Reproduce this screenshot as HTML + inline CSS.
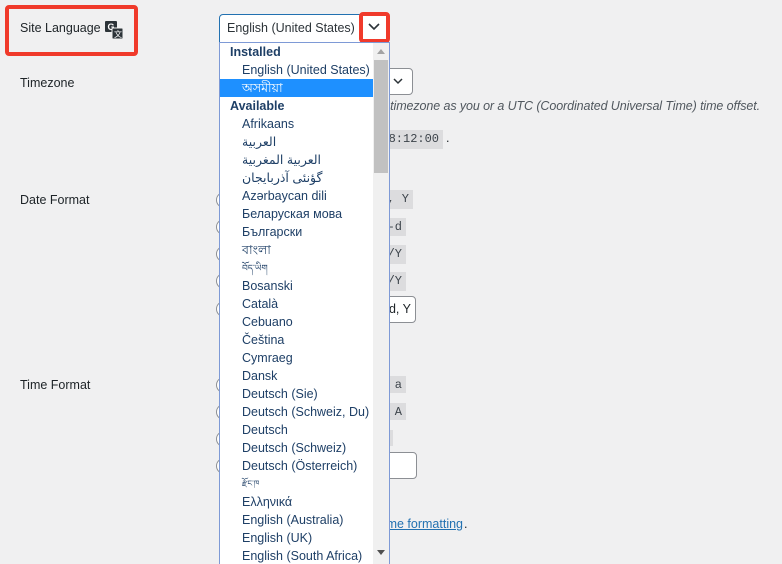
<!DOCTYPE html>
<html style="width:782px;height:564px;overflow:hidden"><head><meta charset="utf-8">
<style>
body{margin:0;width:782px;height:564px;background:#f0f0f1;font-family:"Liberation Sans","DejaVu Sans",sans-serif;font-size:12.5px;color:#1d2327;position:relative;overflow:hidden}
.a{position:absolute;white-space:nowrap}
.lbl{font-size:12.5px;color:#1d2327}
.code{position:absolute;background:#dcdcde;font-family:"Liberation Mono",monospace;font-size:12px;line-height:18px;padding:0 4px;color:#3c434a;text-align:right;box-sizing:border-box;overflow:hidden;white-space:nowrap}
.inp{position:absolute;background:#fff;border:1px solid #8c8f94;border-radius:4px}
.radio{position:absolute;width:14px;height:14px;border:1px solid #8c8f94;border-radius:50%;background:#fff}
.red{position:absolute;border:4px solid #f03a2b;border-radius:4px}
#dd{position:absolute;left:219px;top:42px;width:169px;height:530px;background:#fff;border:1px solid #7e9ad6;overflow:hidden}
#dd .r{position:absolute;left:0;width:153px;height:18px;line-height:18px;font-size:12.5px;color:#1e3f66;padding-left:22px;box-sizing:border-box;font-family:"Liberation Sans","DejaVu Sans","Noto Sans CJK SC",sans-serif;white-space:nowrap;overflow:hidden}
#dd .g{font-weight:bold;padding-left:10px;color:#1e3f66}
#dd .sel{background:#1e90ff;color:#fff}
#sb{position:absolute;left:153px;top:0;width:16px;height:100%;background:#f0f0f0}
</style></head><body>
<div class="a lbl" style="left:20px;top:21px">Site Language</div>
<svg class="a" style="left:105px;top:21px" width="18" height="18" viewBox="0 0 18 18"><rect x="0" y="0" width="12" height="11" rx="1" fill="#2c3338"/><text x="2.5" y="9" font-size="9" fill="#fff" font-family="Liberation Sans" font-weight="bold">G</text><rect x="7" y="7" width="11" height="11" rx="1" fill="#2c3338" stroke="#f0f0f1" stroke-width="1"/><text x="9" y="16" font-size="8" fill="#fff">文</text></svg>
<div class="red" style="left:5px;top:5px;width:125px;height:43px"></div>
<div class="a lbl" style="left:20px;top:76px">Timezone</div>
<div class="a lbl" style="left:20px;top:193px">Date Format</div>
<div class="a lbl" style="left:20px;top:378px">Time Format</div>

<div class="inp" style="left:340px;top:68px;width:71px;height:25px"></div>
<svg class="a" style="left:392px;top:76px" width="12" height="10"><path d="M2 3l4 4 4-4" stroke="#2c3338" stroke-width="1.5" fill="none"/></svg>
<div class="a" style="right:22px;top:99px;font-style:italic;color:#50575e;font-size:12.5px;letter-spacing:-0.1px">Choose a city in the same timezone as you or a UTC (Coordinated Universal Time) time offset.</div>
<div class="code" style="left:360px;top:130px;width:83px;height:19px">18:12:00</div><div class="a" style="left:446px;top:131px">.</div>
<div class="code" style="left:360px;top:190px;width:53px;height:19px">j, Y</div>
<div class="code" style="left:360px;top:218px;width:46px;height:18px">m-d</div>
<div class="code" style="left:360px;top:245px;width:46px;height:19px">d/Y</div>
<div class="code" style="left:360px;top:272px;width:46px;height:19px">m/Y</div>
<div class="inp" style="left:360px;top:296px;width:54px;height:25px"><span style="position:absolute;right:4px;top:5px">d, Y</span></div>
<div class="code" style="left:360px;top:376px;width:46px;height:17px">g:i a</div>
<div class="code" style="left:360px;top:403px;width:46px;height:17px">g:i A</div>
<div class="code" style="left:360px;top:430px;width:33px;height:16px">H:i</div>
<div class="inp" style="left:360px;top:452px;width:55px;height:25px"></div>
<div class="a" style="right:319px;top:517px;color:#2271b1;text-decoration:underline">time formatting</div><div class="a" style="left:464px;top:517px">.</div>
<div class="radio" style="left:216px;top:192px"></div>
<div class="radio" style="left:216px;top:219px"></div>
<div class="radio" style="left:216px;top:246px"></div>
<div class="radio" style="left:216px;top:273px"></div>
<div class="radio" style="left:216px;top:301px"></div>
<div class="radio" style="left:216px;top:377px"></div>
<div class="radio" style="left:216px;top:404px"></div>
<div class="radio" style="left:216px;top:431px"></div>
<div class="radio" style="left:216px;top:458px"></div>

<div class="a" style="left:219px;top:14px;width:168px;height:27px;background:#fff;border:1px solid #2271b1;border-radius:4px 4px 0 0"></div>
<div class="a" style="left:227px;top:21px;color:#2c3338">English (United States)</div>
<svg class="a" style="left:367px;top:21px" width="14" height="12"><path d="M2 3l5 5 5-5" stroke="#2c3338" stroke-width="1.6" fill="none"/></svg>
<div class="red" style="left:359px;top:12px;width:23px;height:23px"></div>

<div id="dd">
<div class="r g" style="top:0">Installed</div>
<div class="r" style="top:18px">English (United States)</div>
<div class="r sel" style="top:36px">অসমীয়া</div>
<div class="r g" style="top:54px">Available</div>
<div class="r" style="top:72px">Afrikaans</div>
<div class="r" style="top:90px">العربية</div>
<div class="r" style="top:108px">العربية المغربية</div>
<div class="r" style="top:126px">گؤنئی آذربایجان</div>
<div class="r" style="top:144px">Azərbaycan dili</div>
<div class="r" style="top:162px">Беларуская мова</div>
<div class="r" style="top:180px">Български</div>
<div class="r" style="top:198px">বাংলা</div>
<div class="r" style="top:216px;font-size:9px">བོད་ཡིག</div>
<div class="r" style="top:234px">Bosanski</div>
<div class="r" style="top:252px">Català</div>
<div class="r" style="top:270px">Cebuano</div>
<div class="r" style="top:288px">Čeština</div>
<div class="r" style="top:306px">Cymraeg</div>
<div class="r" style="top:324px">Dansk</div>
<div class="r" style="top:342px">Deutsch (Sie)</div>
<div class="r" style="top:360px">Deutsch (Schweiz, Du)</div>
<div class="r" style="top:378px">Deutsch</div>
<div class="r" style="top:396px">Deutsch (Schweiz)</div>
<div class="r" style="top:414px">Deutsch (Österreich)</div>
<div class="r" style="top:432px;font-size:8px">རྫོང་ཁ</div>
<div class="r" style="top:450px">Ελληνικά</div>
<div class="r" style="top:468px">English (Australia)</div>
<div class="r" style="top:486px">English (UK)</div>
<div class="r" style="top:504px">English (South Africa)</div>
<div id="sb">
<svg style="position:absolute;left:4px;top:6px" width="8" height="5"><path d="M0 5L4 0L8 5Z" fill="#a3a3a3"/></svg>
<div style="position:absolute;left:1px;top:17px;width:14px;height:113px;background:#c1c1c1"></div>
<svg style="position:absolute;left:4px;top:507px" width="8" height="5"><path d="M0 0L4 5L8 0Z" fill="#505050"/></svg>
</div>
</div>
</body></html>
